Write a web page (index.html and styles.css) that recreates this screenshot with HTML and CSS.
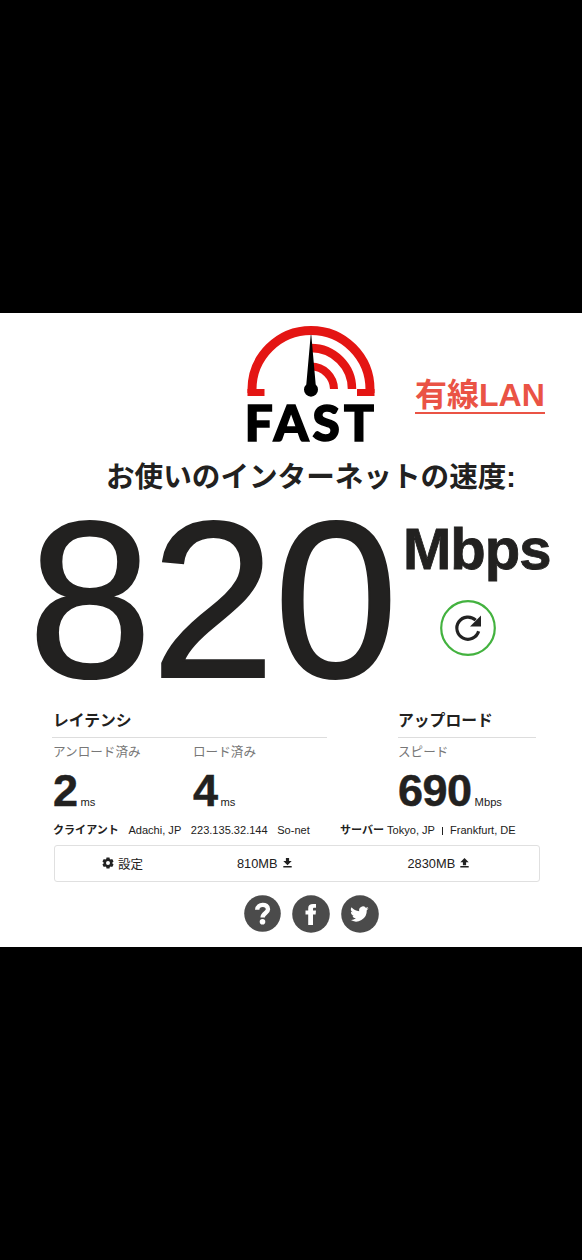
FILE: index.html
```html
<!DOCTYPE html>
<html lang="ja">
<head>
<meta charset="utf-8">
<title>FAST</title>
<link rel="stylesheet" href="styles.css">
</head>
<body>
<main class="panel">
  <header class="top">
    <svg class="logo" viewBox="247 325 128 118" role="img" aria-label="FAST">
      <g fill="none" stroke="#e41513">
        <path stroke-width="9" d="M252 393V389.500A59 59 0 0 1 370 389.500V393"/>
        <path stroke-width="8.500" d="M311 348A41 41 0 0 1 352 389"/>
        <path stroke-width="8" d="M311 366.500A23 23 0 0 1 334 389"/>
      </g>
      <path fill="#e41513" d="M247.500 389H264.500V396H247.500ZM357 389H374.500V396H357Z"/>
      <path fill="#000" d="M310.700 335H311.300L315.700 384.500A7 7 0 1 1 306.300 384.500Z"/>
      <text class="logo-text" y="441" x="244.800 273.700 312.600 344">FAST</text>
    </svg>
    <div class="tag">有線LAN</div>
  </header>
  <h1 class="title">お使いのインターネットの速度:</h1>
  <section class="hero">
    <div class="speed">820</div>
    <div class="side">
      <div class="unit">Mbps</div>
      <svg class="refresh" viewBox="0 0 56 56">
        <circle cx="28" cy="28" r="26.800" fill="#fff" stroke="#43b23f" stroke-width="2.200"/>
        <path d="M38.600 31.300A11.100 11.100 0 1 1 35.700 20.200" fill="none" stroke="#222" stroke-width="3.200"/>
        <path d="M41 15.500V26.500H30Z" fill="#222"/>
      </svg>
    </div>
  </section>
  <section class="stats">
    <div class="group latency">
      <h2>レイテンシ</h2>
      <div class="cols">
        <div class="metric"><span class="label">アンロード済み</span><div class="value"><b>2</b><span>ms</span></div></div>
        <div class="metric"><span class="label">ロード済み</span><div class="value"><b>4</b><span>ms</span></div></div>
      </div>
    </div>
    <div class="group upload">
      <h2>アップロード</h2>
      <div class="metric"><span class="label">スピード</span><div class="value"><b>690</b><span>Mbps</span></div></div>
    </div>
  </section>
  <section class="info">
    <div class="client"><b>クライアント</b><span>Adachi, JP</span><span>223.135.32.144</span><span>So-net</span></div>
    <div class="server"><b>サーバー</b><span>Tokyo, JP</span><i></i><span>Frankfurt, DE</span></div>
  </section>
  <section class="bar">
    <div class="cell settings">
      <svg width="12" height="12" viewBox="0 0 12 12"><path fill="#222" fill-rule="evenodd" d="M4.500.5h3l.3 1.400 1 .6 1.400-.5 1.400 2.400-1.100.9v1.400l1.100.9L10.200 10l-1.400-.5-1 .6-.3 1.400h-3L4.200 10.100l-1-.6L1.800 10 .4 7.600l1.100-.9V5.300L.4 4.400 1.800 2l1.400.5 1-.6ZM6 4A2 2 0 1 0 6 8 2 2 0 1 0 6 4Z"/></svg>
      <span>設定</span>
    </div>
    <div class="cell down"><span>810MB</span>
      <svg width="9" height="10" viewBox="0 0 9 10"><path fill="#222" d="M2.900 0H6.100V3H8.700L4.500 7.200.3 3H2.900ZM.3 8H8.700V9.400H.3Z"/></svg>
    </div>
    <div class="cell up"><span>2830MB</span>
      <svg width="9" height="10" viewBox="0 0 9 10"><path fill="#222" d="M2.900 7.200H6.100V4.200H8.700L4.500 0 .3 4.200H2.900ZM.3 8H8.700V9.400H.3Z"/></svg>
    </div>
  </section>
  <footer class="social">
    <svg width="37" height="37" viewBox="0 0 37 37"><circle cx="18.500" cy="18.500" r="18.300" fill="#4b4b4b"/><path d="M13.200 14.700C13.300 8.500 24 8.300 24 14.200C24 18 18.700 17.900 18.600 22.500" fill="none" stroke="#fff" stroke-width="4.400"/><circle cx="18.500" cy="26.700" r="2.800" fill="#fff"/></svg>
    <svg width="38" height="38" viewBox="0 0 38 38"><circle cx="19" cy="19" r="18.800" fill="#4b4b4b"/><path fill="#fff" d="M16.200 30V19.500H13.500V15.500H16.200V13.200C16.200 10.100 18.100 8.900 21 8.900H24V12.800H22.300C21.400 12.800 21 13.300 21 14.200V15.500H24L23.600 19.500H21V30Z"/></svg>
    <svg width="38" height="38" viewBox="0 0 38 38"><circle cx="19" cy="19" r="18.800" fill="#4b4b4b"/><path fill="#fff" transform="translate(8.800 9.400) scale(.8)" d="M23.600 4.900c-.8.400-1.700.7-2.700.8 1-.6 1.700-1.500 2-2.600-.9.500-1.900.9-3 1.100a4.700 4.700 0 0 0-8.100 4.300C7.900 8.300 4.400 6.400 2.100 3.600a4.700 4.700 0 0 0 1.500 6.300c-.8 0-1.500-.2-2.100-.6v.1a4.700 4.700 0 0 0 3.800 4.600c-.7.200-1.400.2-2.100.1a4.700 4.700 0 0 0 4.400 3.300A9.500 9.500 0 0 1 .6 19.300a13.400 13.400 0 0 0 20.600-11.900c.9-.7 1.700-1.500 2.400-2.500Z"/></svg>
  </footer>
</main>
</body>
</html>
```

FILE: styles.css
```css
* { box-sizing: border-box; margin: 0; padding: 0; }
body {
  width: 582px;
  height: 1260px;
  padding-top: 313px;
  background: #000;
  color: #222120;
  font-family: "Liberation Sans", "Noto Sans CJK JP", sans-serif;
  overflow: hidden;
}
svg { display: block; flex: none; }
.panel { height: 634px; background: #fff; display: flex; flex-direction: column; white-space: nowrap; }
.top { height: 137px; padding: 12px 0 0 247px; display: flex; flex: none; align-items: flex-start; }
.logo { width: 128px; height: 118px; overflow: visible; }
.logo-text { font: 900 49.5px Lato, sans-serif; fill: #000; stroke: #000; stroke-width: 1.600px; }
.tag {
  margin: 53px 0 0 40px;
  height: 36px;
  width: 130px;
  line-height: 34px;
  font-size: 32px;
  font-weight: 700;
  color: #ea5345;
  border-bottom: 2px solid #ea5345;
}
.title { height: 52px; line-height: 54px; padding-left: 106px; font-size: 28.600px; flex: none; }
.hero { display: flex; height: 200px; flex: none; padding-left: 28px; }
.speed { width: 375px; font-size: 223px; line-height: 196px; letter-spacing: -1px; -webkit-text-stroke: 2px #222120; }
.side { padding-top: 14px; }
.unit { font-size: 58px; font-weight: 700; line-height: 66px; letter-spacing: -1px; -webkit-text-stroke: .8px #222120; }
.refresh { width: 56px; height: 56px; margin: 18px 0 0 37px; }
.stats { display: flex; height: 118px; padding-left: 52px; gap: 71px; flex: none; }
.group h2 { height: 36px; line-height: 38px; padding-left: 1px; font-size: 15.800px; border-bottom: 1px solid #ddd; }
.latency { width: 275px; }
.upload { width: 138px; }
.upload h2, .upload .metric { padding-left: 0; }
.cols { display: grid; grid-template-columns: 140px 1fr; }
.metric { padding-left: 1px; }
.label { display: block; height: 28px; line-height: 28px; font-size: 12.600px; color: #777; }
.value { display: flex; align-items: baseline; height: 48px; line-height: 49px; }
.value b { font-size: 45px; letter-spacing: -.5px; -webkit-text-stroke: .5px #222120; }
.value span { font-size: 11.200px; margin-left: 3px; }
.info { display: flex; height: 25px; line-height: 21px; padding-left: 53px; font-size: 11.050px; flex: none; }
.client { display: flex; width: 287px; gap: 9.600px; }
.server { display: flex; gap: 3px; }
.server i { width: 1px; height: 8px; background: #222; margin: 7px 4px 0 4px; }
.bar { display: flex; align-items: center; width: 486px; height: 37px; margin-left: 54px; border: 1px solid #e0e0e0; border-radius: 3px; font-size: 12.800px; flex: none; }
.cell { display: flex; align-items: center; gap: 5px; }
.cell svg { margin-bottom: 2px; }
.settings { width: 182px; padding-left: 47px; gap: 4px; }
.settings span { font-size: 12.500px; }
.down { width: 170.500px; }
.social { display: flex; align-items: flex-start; gap: 11px; padding: 13px 0 0 244px; }
```
